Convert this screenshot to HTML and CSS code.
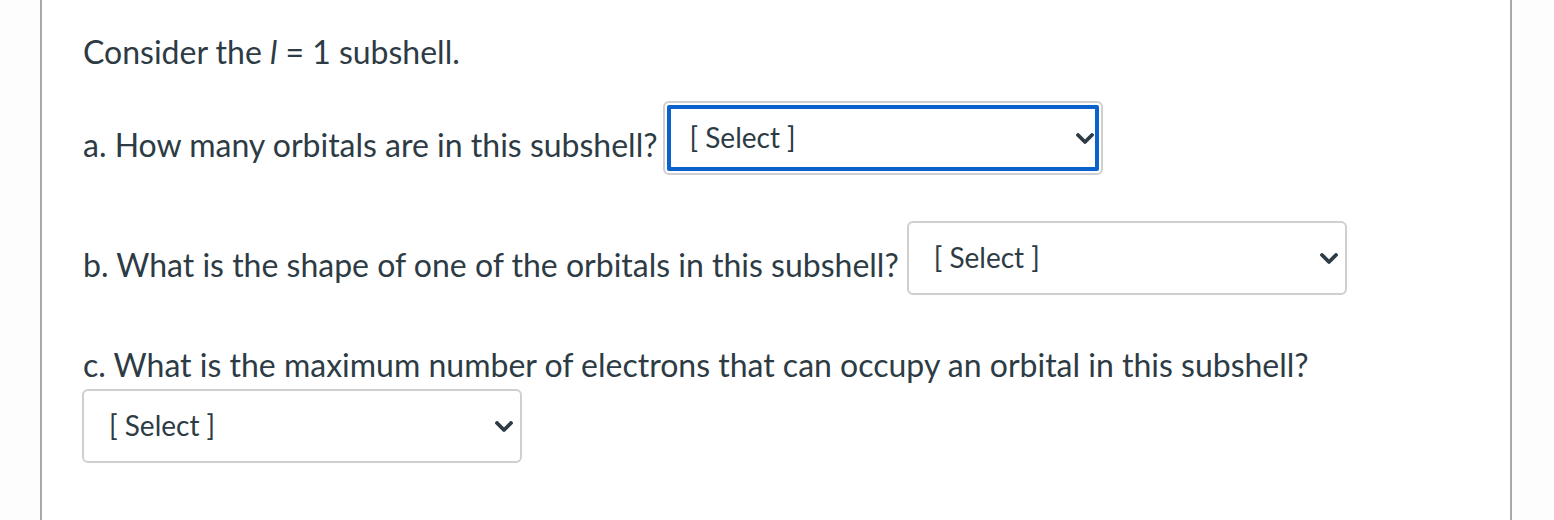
FILE: index.html
```html
<!DOCTYPE html>
<html>
<head>
<meta charset="utf-8">
<link rel="stylesheet" href="styles.css">
</head>
<body>
<div class="page">
  <div class="question">
    <p class="intro">Consider the <em>l</em> = 1 subshell.</p>
    <div class="row row-a">
      <span class="label">a. How many orbitals are in this subshell?</span>
      <span class="select-wrap focused">
        <select class="sel"><option>[ Select ]</option></select>
        <svg class="chev" viewBox="0 0 18 12" width="18" height="12"><path d="M2 2 L9 9 L16 2" fill="none" stroke="#2d3b45" stroke-width="3.8" stroke-linecap="round" stroke-linejoin="round"/></svg>
      </span>
    </div>
    <div class="row row-b">
      <span class="label">b. What is the shape of one of the orbitals in this subshell?</span>
      <span class="select-wrap">
        <select class="sel"><option>[ Select ]</option></select>
        <svg class="chev" viewBox="0 0 18 12" width="18" height="12"><path d="M2 2 L9 9 L16 2" fill="none" stroke="#2d3b45" stroke-width="3.8" stroke-linecap="round" stroke-linejoin="round"/></svg>
      </span>
    </div>
    <div class="row-c">
      <span class="label">c. What is the maximum number of electrons that can occupy an orbital in this subshell?</span>
      <span class="select-wrap">
        <select class="sel"><option>[ Select ]</option></select>
        <svg class="chev" viewBox="0 0 18 12" width="18" height="12"><path d="M2 2 L9 9 L16 2" fill="none" stroke="#2d3b45" stroke-width="3.8" stroke-linecap="round" stroke-linejoin="round"/></svg>
      </span>
    </div>
  </div>
</div>
</body>
</html>
```

FILE: styles.css
```css
html, body {
  margin: 0;
  padding: 0;
  background: #fdfdfd;
}
body {
  font-family: Lato, "Open Sans", sans-serif;
  color: #2d3b45;
}
.page {
  width: 1554px;
  height: 520px;
  overflow: hidden;
}
.question {
  margin-left: 40px;
  width: 1472px;
  height: 520px;
  border-left: 2px solid #a9a9a9;
  border-right: 2px solid #a9a9a9;
  background: #fff;
  padding-left: 41px;
  box-sizing: border-box;
  font-size: 32px;
}
.intro {
  margin: 0;
  padding-top: 33px;
  line-height: 38px;
}
.row {
  display: flex;
  align-items: center;
  gap: 8px;
}
.row-a {
  margin-top: 30px;
  gap: 5px;
}
.row-b {
  margin-top: 46px;
}
.label {
  line-height: 38px;
  position: relative;
  top: 7px;
}
.row-c {
  margin-top: 51px;
  display: flex;
  flex-direction: column;
  align-items: flex-start;
  gap: 5px;
}
.row-c .label {
  top: 0;
}
.row-c .select-wrap {
  margin-left: -1px;
}
.select-wrap {
  position: relative;
  display: inline-block;
  width: 440px;
  height: 74px;
}
.sel {
  -webkit-appearance: none;
  appearance: none;
  width: 100%;
  height: 100%;
  box-sizing: border-box;
  border: 2px solid #cfcfcf;
  border-radius: 6px;
  background: #fff;
  font-family: Lato, "Open Sans", sans-serif;
  font-size: 28px;
  color: #2d3b45;
  padding: 0 0 3px 25px;
  margin: 0;
  outline: none;
}
.focused .sel {
  outline: 4px solid #0b62cc;
  outline-offset: -8px;
}
.chev {
  position: absolute;
  right: 9px;
  top: 32px;
}
```
